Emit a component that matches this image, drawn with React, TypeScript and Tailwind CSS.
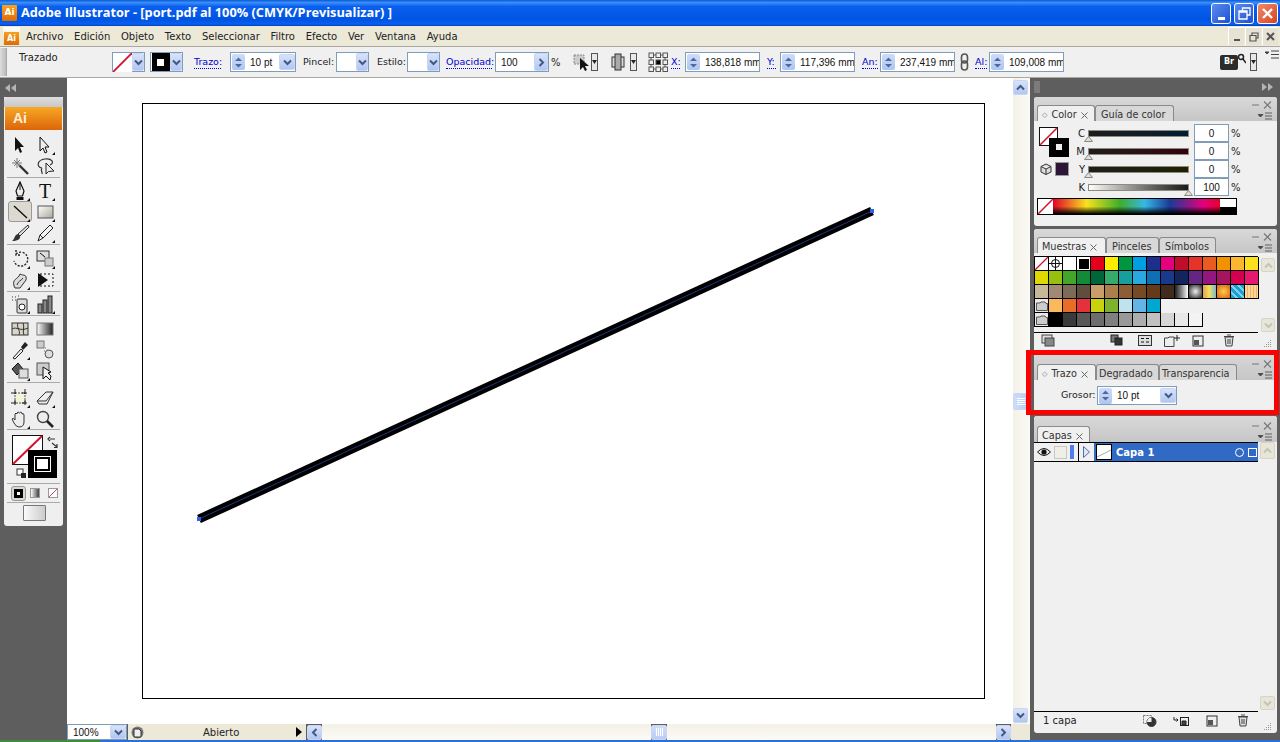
import type { ReactNode } from "react";

const ui = "font-['DejaVu_Sans',sans-serif]";
const num = "font-['Liberation_Sans',sans-serif] text-[10px] text-[#111] whitespace-nowrap";

function Chevron({ dir = "down" }: { dir?: "down" | "up" | "left" | "right" }) {
  const rot = { down: 0, up: 180, left: 90, right: -90 }[dir];
  return (
    <svg width="9" height="7" viewBox="0 0 9 7" style={{ transform: `rotate(${rot}deg)` }}>
      <path d="M1 1.5 L4.5 5 L8 1.5" fill="none" stroke="#44597f" strokeWidth="2" />
    </svg>
  );
}

function XpButton({ dir, className }: { dir: "down" | "up" | "left" | "right"; className: string }) {
  return (
    <div className={`flex items-center justify-center rounded-[2px] border border-[#c9d6f2] bg-gradient-to-b from-[#d8e3fb] to-[#b1c6f3] ${className}`}>
      <Chevron dir={dir} />
    </div>
  );
}

function Spin() {
  return (
    <div className="flex h-[16px] w-[13px] shrink-0 items-center justify-center rounded-[2px] bg-gradient-to-b from-[#cfdcf8] to-[#aec4f1]">
      <svg width="9" height="13" viewBox="0 0 9 13">
        <path d="M1 5 L4.5 1.5 L8 5 Z M1 8 L4.5 11.5 L8 8 Z" fill="#4c6a9c" />
      </svg>
    </div>
  );
}

function Measure({ value, className = "" }: { value: string; className?: string }) {
  return (
    <div className={`flex h-[20px] w-[75px] items-center overflow-hidden border border-[#7f9db9] bg-white pl-[1px] ${className}`}>
      <Spin />
      <span className={`ml-[5px] ${num}`}>{value}</span>
    </div>
  );
}

function BlueLabel({ children, className = "" }: { children: ReactNode; className?: string }) {
  return <span className={`whitespace-nowrap border-b border-dotted border-[#0000cc] text-[9.5px] leading-[12px] text-[#0000d0] ${className}`}>{children}</span>;
}

function Swatch({ children, className = "" }: { children?: ReactNode; className?: string }) {
  return (
    <div className={`flex h-[20px] w-[33px] items-stretch border border-[#7f9db9] bg-white ${className}`}>
      <div className="flex w-[20px] items-center justify-center">{children}</div>
      <XpButton dir="down" className="w-[12px]" />
    </div>
  );
}

function MiniDrop({ className = "" }: { className?: string }) {
  return (
    <div className={`flex h-[18px] w-[7px] items-center justify-center border border-[#555] bg-[#e8e8e8] ${className}`}>
      <svg width="5" height="4" viewBox="0 0 5 4"><path d="M0 0 H5 L2.5 4 Z" fill="#222" /></svg>
    </div>
  );
}

function NoneSlash({ size = 20 }: { size?: number }) {
  return (
    <svg width={size} height={size} viewBox="0 0 20 20">
      <rect width="20" height="20" fill="#fff" />
      <path d="M0 20 L20 0" stroke="#d4122d" strokeWidth="2" />
    </svg>
  );
}

function TitleBar() {
  return (
    <div className="flex h-[26px] items-center bg-[linear-gradient(180deg,#0a5bd8_0%,#3b8ffb_10%,#0a5fee_25%,#0054e3_75%,#0a60ee_92%,#0040c0_100%)] pl-[2px] pr-[2px]">
      <div className="flex h-[16px] w-[15px] items-center justify-center rounded-[1px] bg-gradient-to-b from-[#f9a61c] to-[#dd6a06] text-[9px] font-bold text-white">Ai</div>
      <span className="ml-[4px] whitespace-nowrap font-['Open_Sans',sans-serif] text-[12.75px] font-bold text-white">Adobe Illustrator - [port.pdf al 100% (CMYK/Previsualizar) ]</span>
      <div className="ml-auto flex gap-[3px]">
        <div className="flex h-[21px] w-[20px] items-end justify-center rounded-[3px] border border-white bg-gradient-to-br from-[#5b8cf0] to-[#1f4fd0] pb-[3px]">
          <div className="h-[3px] w-[7px] bg-white" />
        </div>
        <div className="flex h-[21px] w-[20px] items-center justify-center rounded-[3px] border border-white bg-gradient-to-br from-[#5b8cf0] to-[#1f4fd0]">
          <svg width="13" height="13" viewBox="0 0 13 13" fill="none" stroke="#fff" strokeWidth="1.3"><path d="M4.5 3.5 V1 H12 V8 H9.5 M1 4 H9 V12 H1 Z M1 5 H9" /></svg>
        </div>
        <div className="flex h-[21px] w-[21px] items-center justify-center rounded-[3px] border border-white bg-gradient-to-br from-[#ee8a68] to-[#d8401c]">
          <svg width="13" height="13" viewBox="0 0 13 13"><path d="M2 2 L11 11 M11 2 L2 11" stroke="#fff" strokeWidth="2.4" /></svg>
        </div>
      </div>
    </div>
  );
}

function MenuBar() {
  const items = ["Archivo", "Edición", "Objeto", "Texto", "Seleccionar", "Filtro", "Efecto", "Ver", "Ventana", "Ayuda"];
  return (
    <div className="flex h-[20px] items-center bg-[#ece9d8] pl-[3px] pr-[2px]">
      <div className="flex h-[18px] w-[17px] items-end justify-center rounded-[1px] bg-gradient-to-b from-white to-[#f3d8a8]">
        <div className="flex h-[13px] w-[15px] items-center justify-center bg-gradient-to-b from-[#f3a020] to-[#dc6a08] text-[8px] font-bold text-white">Ai</div>
      </div>
      <div className="ml-[6px] flex gap-[10.7px] text-[10px] text-[#222]">
        {items.map((m) => <span key={m}>{m}</span>)}
      </div>
      <div className="ml-auto flex gap-[1px]">
        {["min", "res", "x"].map((k) => (
          <div key={k} className="flex h-[18px] w-[16px] items-center justify-center border-l border-t border-white bg-[#e6e3d4]">
            {k === "min" && <div className="mt-[6px] h-[2px] w-[6px] bg-[#555]" />}
            {k === "res" && <svg width="10" height="10" viewBox="0 0 10 10" fill="none" stroke="#555" strokeWidth="1.2"><path d="M3 3 V1 H9 V6 H7 M1 3.5 H7 V9 H1 Z" /></svg>}
            {k === "x" && <svg width="9" height="9" viewBox="0 0 9 9"><path d="M1 1 L8 8 M8 1 L1 8" stroke="#555" strokeWidth="2" /></svg>}
          </div>
        ))}
      </div>
    </div>
  );
}

function ControlBar() {
  return (
    <div className="flex h-[32px] items-center overflow-hidden border-y border-[#a8a8a0] bg-[#f0f0f0] [&>*]:shrink-0">
      <div className="h-[28px] w-[7px] border-r border-[#aaa] bg-gradient-to-r from-[#ddd] to-[#bbb]" />
      <span className="ml-[12px] mb-[9px] w-[93px] text-[10px] text-[#222]">Trazado</span>
      <Swatch><NoneSlash size={19} /></Swatch>
      <Swatch className="ml-[5px]">
        <div className="flex h-[18px] w-[18px] items-center justify-center bg-black"><div className="h-[7px] w-[7px] bg-white" /></div>
      </Swatch>
      <BlueLabel className="ml-[11px] w-[27px]">Trazo:</BlueLabel>
      <div className="ml-[9px] flex h-[20px] w-[66px] items-center border border-[#7f9db9] bg-white pl-[1px]">
        <Spin />
        <span className={`ml-[5px] ${num}`}>10 pt</span>
        <XpButton dir="down" className="ml-auto h-[16px] w-[16px]" />
      </div>
      <span className="ml-[7px] w-[33px] whitespace-nowrap text-[9.5px] text-[#222]">Pincel:</span>
      <Swatch />
      <span className="ml-[8px] w-[30px] whitespace-nowrap text-[9.5px] text-[#222]">Estilo:</span>
      <Swatch />
      <BlueLabel className="ml-[6px] w-[46px]">Opacidad:</BlueLabel>
      <div className="ml-[3px] flex h-[20px] w-[54px] items-center border border-[#7f9db9] bg-white pl-[5px]">
        <span className={num}>100</span>
        <XpButton dir="right" className="ml-auto h-[18px] w-[14px]" />
      </div>
      <span className="ml-[2px] w-[21px] text-[10px] text-[#222]">%</span>
      <svg width="18" height="20" viewBox="0 0 18 20">
        <rect x="2" y="3" width="10" height="9" fill="#ccc" stroke="#888" strokeDasharray="2 1" />
        <path d="M8 6 L8 18 L11 15 L13 19 L15 18 L13 14 L17 14 Z" fill="#111" />
      </svg>
      <MiniDrop className="ml-[1px]" />
      <svg className="ml-[13px]" width="14" height="18" viewBox="0 0 14 18">
        <rect x="1" y="4" width="12" height="10" fill="#ddd" stroke="#333" />
        <rect x="4" y="1" width="6" height="16" fill="#aaa" stroke="#333" />
      </svg>
      <MiniDrop className="ml-[5px]" />
      <svg className="ml-[11px]" width="20" height="20" viewBox="0 0 20 20">
        {[1, 8, 15].flatMap((x) => [1, 8, 15].map((y) => (
          <rect key={`${x}-${y}`} x={x} y={y} width="4.5" height="4.5" fill={x === 8 && y === 8 ? "#000" : "#eee"} stroke="#555" />
        )))}
        <path d="M5.5 3 H8 M12.5 3 H15 M5.5 17 H8 M12.5 17 H15 M3 5.5 V8 M3 12.5 V15 M17 5.5 V8 M17 12.5 V15" stroke="#555" />
      </svg>
      <BlueLabel className="ml-[3px] w-[9px]">X:</BlueLabel>
      <Measure value="138,818 mm" className="ml-[5px]" />
      <BlueLabel className="ml-[7px] w-[9px]">Y:</BlueLabel>
      <Measure value="117,396 mm" className="ml-[4px]" />
      <BlueLabel className="ml-[7px] w-[16px]">An:</BlueLabel>
      <Measure value="237,419 mm" className="ml-[2px]" />
      <svg className="ml-[5px]" width="9" height="18" viewBox="0 0 9 18" fill="none" stroke="#555" strokeWidth="1.6">
        <rect x="1.5" y="1" width="6" height="9" rx="3" />
        <rect x="1.5" y="8" width="6" height="9" rx="3" />
      </svg>
      <BlueLabel className="ml-[6px] w-[12px]">Al:</BlueLabel>
      <Measure value="109,008 mm" className="ml-[2px]" />
      <div className="ml-[156px] flex h-[15px] w-[18px] items-center justify-center rounded-[2px] bg-[#2c2c2c] text-[8px] font-bold text-white">Br</div>
      <svg className="mb-[6px]" width="8" height="14" viewBox="0 0 8 14" fill="none" stroke="#222" strokeWidth="1.5"><circle cx="3" cy="5" r="2.5" /><path d="M5 7 L8 11" /></svg>
      <MiniDrop className="ml-[4px]" />
      <svg className="ml-[8px] mb-[14px]" width="14" height="10" viewBox="0 0 14 10"><path d="M0 2 H4 L2 4 Z M6 1 H14 M6 4.5 H14 M6 8 H14" stroke="#444" fill="#444" /></svg>
    </div>
  );
}

const toolIcons: Record<string, ReactNode> = {
  select: <path d="M5 2 L5 16 L8 13 L10 18 L12 17 L10 12 L14 12 Z" fill="#111" />,
  direct: <path d="M5 2 L5 16 L8 13 L10 18 L12 17 L10 12 L14 12 Z" fill="#eee" stroke="#111" />,
  wand: <><path d="M9 9 L18 18" stroke="#333" strokeWidth="2.4" /><path d="M7 2 V12 M2 7 H12 M4 4 L10 10 M10 4 L4 10" stroke="#777" /></>,
  lasso: <><path d="M7 12 C1 11 2 4 10 3 C17 2 20 7 15 9 M7 12 C5 15 8 16 7 18" fill="none" stroke="#333" strokeWidth="1.2" /><path d="M11 7 L11 18 L13.5 15.5 L19 15 Z" fill="#eee" stroke="#222" /></>,
  pen: <><path d="M10 1 L14 10 L12.5 15 H7.5 L6 10 Z" fill="#eee" stroke="#111" strokeWidth="1.2" /><path d="M10 1 V9" stroke="#111" /><rect x="6.5" y="16" width="7" height="3" fill="#111" /></>,
  type: <text x="10" y="17" textAnchor="middle" fontSize="20" fontFamily="Liberation Serif" fill="#111">T</text>,
  line: <path d="M4 4 L17 16" stroke="#111" strokeWidth="1.4" />,
  rect: <><defs><linearGradient id="tool-rect" x1="0" y1="0" x2="1" y2="1"><stop offset="0" stopColor="#fff" /><stop offset="1" stopColor="#aaa79a" /></linearGradient></defs><rect x="3" y="4" width="15" height="12" fill="url(#tool-rect)" stroke="#555" /></>,
  brush: <><path d="M18 2 L8 11 L10 13 L19 4 Z" fill="#ddd" stroke="#333" /><path d="M8 11 C4 12 5 16 2 18 C7 18 11 16 10 13 Z" fill="#333" /></>,
  pencil: <><path d="M15 2 L18 5 L8 15 L3 18 L5 12 Z" fill="#f3f3f3" stroke="#222" /><path d="M5 12 L8 15" stroke="#222" /></>,
  rotate: <path d="M6 5 A7 7 0 1 1 4 12 M6 1 V6 H11" fill="none" stroke="#222" strokeWidth="1.4" strokeDasharray="2 1.5" />,
  scale: <><rect x="2" y="2" width="12" height="10" fill="#ddd" stroke="#333" /><rect x="10" y="9" width="8" height="8" fill="#ccc" stroke="#777" /><path d="M5 4 L10 8" stroke="#111" /></>,
  warp: <><path d="M4 16 C2 8 8 10 10 4 C14 6 17 4 16 10 L10 18 H5 Z" fill="#ddd" stroke="#333" /><path d="M7 15 C8 11 11 11 13 8" fill="none" stroke="#333" /></>,
  free: <><rect x="5" y="4" width="13" height="12" fill="none" stroke="#111" strokeDasharray="2 2" /><path d="M3 3 L3 17 L13 10 Z" fill="#111" /></>,
  spray: <><path d="M2 3 h1 M5 3 h1 M2 6 h1 M5 6 h1 M8 2 h1" stroke="#333" /><rect x="7" y="5" width="10" height="14" rx="1" fill="#ddd" stroke="#333" /><circle cx="12" cy="13" r="3" fill="#fff" stroke="#222" /></>,
  graph: <><rect x="3" y="10" width="4" height="9" fill="#888" stroke="#222" /><rect x="8" y="6" width="4" height="13" fill="#888" stroke="#222" /><rect x="13" y="2" width="4" height="17" fill="#888" stroke="#222" /></>,
  mesh: <><rect x="2" y="4" width="16" height="12" fill="#d8d4c8" stroke="#333" /><path d="M2 10 C7 7 10 13 18 9 M8 4 C6 9 11 11 9 16 M13 4 C15 8 12 12 14 16" fill="none" stroke="#333" /></>,
  gradient: <><defs><linearGradient id="tool-grad"><stop offset="0" stopColor="#fff" /><stop offset="1" stopColor="#222" /></linearGradient></defs><rect x="2" y="4" width="16" height="12" fill="url(#tool-grad)" stroke="#777" /></>,
  dropper: <><path d="M3 18 L11 9 L13 11 L5 19 Z" fill="#eee" stroke="#222" /><path d="M11 7 L15 2 L18 5 L13 10 Z" fill="#222" /></>,
  blend: <><rect x="2" y="1" width="7" height="7" fill="#ccc" stroke="#777" /><circle cx="14" cy="14" r="4" fill="#ddd" stroke="#555" /><path d="M10 8 h1 M12 10 h1 M9 11 h1" stroke="#777" /></>,
  bucket: <><path d="M2 8 L8 2 L13 8 L7 14 Z" fill="#555" stroke="#111" /><rect x="9" y="8" width="9" height="9" fill="#ddd" stroke="#555" /></>,
  paintsel: <><rect x="2" y="2" width="12" height="12" fill="#ccc" stroke="#555" /><path d="M8 6 L8 18 L11 15 L15 19 L16 15 L13 12 L16 11 Z" fill="#eee" stroke="#111" /></>,
  slice: <><rect x="5" y="5" width="10" height="10" fill="#f4f4d8" stroke="#555" strokeDasharray="2 1" /><path d="M1 5 H19 M1 15 H19 M5 1 V19 M15 1 V19" stroke="#222" strokeDasharray="5 6" /></>,
  eraser: <><path d="M2 13 L11 4 H18 L12 16 H4 Z" fill="#eee" stroke="#333" /><path d="M2 13 H11 L18 4" fill="none" stroke="#333" /></>,
  hand: <path d="M5 11 V5 Q6 3 7 5 V4 Q8 2 9.5 4 Q11 2 12 4 V5 Q14 4 14 6 V13 Q14 18 9 18 Q6 18 4 14 L2 10 Q3 8 5 11 Z" fill="#eee" stroke="#333" />,
  zoom: <><circle cx="8" cy="8" r="5.5" fill="#eee" stroke="#444" strokeWidth="1.4" /><path d="M12 12 L18 18" stroke="#222" strokeWidth="2.6" /></>,
};

function Tool({ name, active, flag = true }: { name: string; active?: boolean; flag?: boolean }) {
  return (
    <div className={`flex h-[21px] w-[24px] items-center justify-center ${active ? "rounded-[3px] border border-[#999] bg-[#dcdad0]" : ""}`}>
      <svg width="20" height="20" viewBox="0 0 20 20">
        {toolIcons[name]}
        {flag && <path d="M20 17 V20 H17 Z" fill="#111" />}
      </svg>
    </div>
  );
}

function ToolRow({ a, b, active, flagA = true, flagB = true }: { a: string; b: string; active?: boolean; flagA?: boolean; flagB?: boolean }) {
  return (
    <div className="flex gap-[1px] pl-[4px]">
      <Tool name={a} active={active} flag={flagA} />
      <Tool name={b} flag={flagB} />
    </div>
  );
}

function Sep() {
  return <div className="mx-[3px] h-px bg-[#a9a9a9]" />;
}

function Toolbox() {
  return (
    <div className="flex w-[67px] shrink-0 flex-col bg-[#5e5e5e] pl-[4px] pr-[4px]">
      <div className="flex h-[19px] items-center pl-[1px]">
        <svg width="11" height="8" viewBox="0 0 11 8"><path d="M5 0 V8 L0 4 Z M11 0 V8 L6 4 Z" fill="#b5b5b5" /></svg>
      </div>
      <div className="flex h-[429px] flex-col rounded-b-[3px] bg-[#efefef]">
        <div className="h-[10px] rounded-t-[3px] bg-gradient-to-b from-[#dedede] to-[#c8c8c8]" />
        <div className="mx-[1px] flex h-[23px] items-center bg-gradient-to-b from-[#f6a723] to-[#dd6509] pl-[8px] font-['Liberation_Sans',sans-serif] text-[14px] font-bold text-[#fdeed8]">Ai</div>
        <div className="flex flex-col pt-[4px]">
          <ToolRow a="select" b="direct" flagA={false} />
          <ToolRow a="wand" b="lasso" flagA={false} flagB={false} />
        </div>
        <div className="pt-[1px]"><Sep /></div>
        <div className="flex flex-col pt-[2px]">
          <ToolRow a="pen" b="type" />
          <ToolRow a="line" b="rect" active />
          <ToolRow a="brush" b="pencil" flagA={false} />
        </div>
        <div className="pt-[1px]"><Sep /></div>
        <div className="flex flex-col pt-[3px]">
          <ToolRow a="rotate" b="scale" />
          <ToolRow a="warp" b="free" flagB={false} />
        </div>
        <div className="pt-[1px]"><Sep /></div>
        <div className="pt-[1px]"><ToolRow a="spray" b="graph" /></div>
        <div className="pt-[1px]"><Sep /></div>
        <div className="flex flex-col pt-[2px]">
          <ToolRow a="mesh" b="gradient" flagA={false} flagB={false} />
          <ToolRow a="dropper" b="blend" flagB={false} />
          <ToolRow a="bucket" b="paintsel" flagB={false} />
        </div>
        <div className="pt-[1px]"><Sep /></div>
        <div className="flex flex-col pt-[4px]">
          <ToolRow a="slice" b="eraser" />
          <ToolRow a="hand" b="zoom" flagB={false} />
        </div>
        <Sep />
        <svg className="ml-[7px] mt-[5px]" width="50" height="44" viewBox="0 0 50 44">
          <rect x="1.5" y="0.5" width="30" height="29" fill="#fff" stroke="#111" />
          <path d="M2 29 L31 1" stroke="#d4122d" strokeWidth="2" />
          <path d="M39 4 L44 4 M46 12 L41 8 M39 2 L37 4 L39 6 M46 9 V12.5 H43" fill="none" stroke="#333" strokeWidth="1.2" />
          <rect x="6" y="34" width="6" height="6" fill="#fff" stroke="#333" />
          <rect x="10" y="38" width="5" height="5" fill="#222" />
          <rect x="17" y="15" width="29" height="28" fill="#000" />
          <rect x="23.5" y="21.5" width="16" height="15" fill="none" stroke="#fff" />
          <rect x="26" y="24" width="11" height="10" fill="#fff" />
        </svg>
        <div className="mt-[4px]"><Sep /></div>
        <div className="flex h-[18px] items-center pl-[7px]">
          <div className="flex h-[15px] w-[15px] items-center justify-center rounded-[3px] border border-[#999] bg-[#dcdad0]">
            <div className="flex h-[9px] w-[9px] items-center justify-center bg-black"><div className="h-[3px] w-[3px] bg-white" /></div>
          </div>
          <div className="ml-[4px] h-[10px] w-[10px] border border-[#999] bg-gradient-to-r from-white to-[#444]" />
          <div className="ml-[8px] h-[10px] w-[10px] border border-[#999]"><NoneSlash size={8} /></div>
        </div>
        <Sep />
        <div className="ml-[19px] mt-[2px] h-[16px] w-[23px] rounded-[1px] border border-[#777] bg-gradient-to-r from-[#fafafa] to-[#ccc]" />
      </div>
    </div>
  );
}

function Canvas() {
  return (
    <div className="min-w-0 flex-1 bg-white pl-[75px] pt-[25px]">
      <div className="relative h-[596px] w-[843px] border border-black">
        <svg className="absolute left-[-1px] top-[-1px]" width="843" height="596" viewBox="0 0 843 596">
          <path d="M57 416 L730 108" stroke="#000" strokeWidth="9" />
          <path d="M57 416 L730 108" stroke="#3f6ff0" strokeWidth="0.5" />
          <rect x="55" y="414" width="4" height="4" fill="#2a62f0" />
          <rect x="728" y="106" width="4" height="4" fill="#2a62f0" />
        </svg>
      </div>
    </div>
  );
}

function VScroll() {
  return (
    <div className="flex w-[17px] shrink-0 flex-col bg-gradient-to-r from-[#f3f1e6] to-[#fbfaf5] pt-[2px]">
      <XpButton dir="up" className="h-[15px] w-[15px]" />
      <div className="mt-[298px] flex h-[17px] w-[15px] flex-col items-center justify-center gap-[1px] rounded-[2px] border border-[#c9d6f2] bg-gradient-to-r from-[#cfdcfa] to-[#b9ccf5]">
        {[0, 1, 2, 3].map((i) => <div key={i} className="h-px w-[8px] bg-white" />)}
      </div>
      <XpButton dir="down" className="mt-[298px] h-[15px] w-[15px]" />
    </div>
  );
}

function StatusBar() {
  return (
    <div className="flex h-[16px] shrink-0 items-center">
      <div className="flex h-[16px] w-[60px] items-center border border-[#7f9db9] bg-white pl-[5px]">
        <span className={num}>100%</span>
        <XpButton dir="down" className="ml-auto h-[14px] w-[16px]" />
      </div>
      <div className="ml-[1px] flex h-[16px] w-[178px] items-center bg-[#ece9d8] pl-[3px]">
        <svg width="13" height="13" viewBox="0 0 13 13"><circle cx="6.5" cy="6.5" r="6" fill="#777" /><path d="M3 11 V3 H8 L10 5 V11 Z" fill="#eee" stroke="#333" /></svg>
        <span className="ml-[59px] w-[93px] text-[10px] text-[#222]">Abierto</span>
        <svg width="6" height="10" viewBox="0 0 6 10"><path d="M0 0 L6 5 L0 10 Z" fill="#000" /></svg>
      </div>
      <XpButton dir="left" className="ml-[1px] h-[15px] w-[15px]" />
      <div className="h-[16px] w-[329px] bg-gradient-to-b from-[#f3f1e6] to-[#fbfaf5]" />
      <div className="flex h-[15px] w-[16px] items-center justify-center gap-[1px] rounded-[2px] border border-[#c9d6f2] bg-gradient-to-b from-[#cfdcfa] to-[#b9ccf5]">
        {[0, 1, 2, 3].map((i) => <div key={i} className="h-[8px] w-px bg-white" />)}
      </div>
      <div className="h-[16px] w-[329px] bg-gradient-to-b from-[#f3f1e6] to-[#fbfaf5]" />
      <XpButton dir="right" className="h-[15px] w-[15px]" />
      <div className="h-[16px] flex-1 bg-[#ece9d8]" />
    </div>
  );
}

function Tab({ label, active, updown, width, pad = "pl-[4px]" }: { label: string; active?: boolean; updown?: boolean; width: string; pad?: string }) {
  return (
    <div className={`flex h-[16px] items-center whitespace-nowrap rounded-t-[3px] border border-b-0 border-[#8a8a8a] pt-[3px] text-[9.7px] text-[#333] ${pad} ${width} ${active ? "bg-[#f0f0f0]" : "bg-[#d8d8d8]"}`}>
      {updown && <span className="mr-[4px] text-[7px] leading-none text-[#777]">◇</span>}
      <span>{label}</span>
      {active && (
        <svg className="ml-[4px]" width="7" height="7" viewBox="0 0 7 7"><path d="M0.5 0.5 L6.5 6.5 M6.5 0.5 L0.5 6.5" stroke="#666" /></svg>
      )}
    </div>
  );
}

function PanelHead({ tabs, pad }: { tabs: ReactNode; pad: string }) {
  return (
    <div className={`flex items-end rounded-t-[3px] bg-gradient-to-b from-[#d9d9d9] to-[#c6c6c6] pl-[3px] ${pad}`}>
      <div className="flex">{tabs}</div>
      <div className="-mt-[4px] ml-auto flex h-[20px] flex-col items-end justify-between pr-[5px]">
        <svg width="26" height="8" viewBox="0 0 26 8"><path d="M6 4 H13 M18 0.5 L25 7.5 M25 0.5 L18 7.5" stroke="#777" strokeWidth="1.1" /></svg>
        <svg width="14" height="9" viewBox="0 0 14 9"><path d="M0 2.5 H5 L2.5 5 Z M7 1 H14 M7 4 H14 M7 7 H14" stroke="#444" fill="#444" strokeWidth="0.8" /></svg>
      </div>
    </div>
  );
}

function ColorRow({ label, value, track, thumb }: { label: string; value: string; track: string; thumb: "left" | "right" }) {
  return (
    <div className="flex h-[18px] items-center">
      <span className="w-[15px] text-right text-[10px] text-[#222]">{label}</span>
      <div className="relative ml-[3px] h-[7px] w-[101px]">
        <div className={`h-[7px] w-[101px] border border-[#8f8a7a] ${track}`} />
        <svg className={`absolute top-[6px] ${thumb === "left" ? "left-[-4px]" : "right-[-4px]"}`} width="9" height="6" viewBox="0 0 9 6"><path d="M0.5 5.5 L4.5 0.5 L8.5 5.5 Z" fill="#e4e0d0" stroke="#888" /></svg>
      </div>
      <div className={`ml-[5px] flex h-[18px] w-[35px] items-center justify-center border border-[#7f9db9] bg-white ${num}`}>{value}</div>
      <span className="ml-[2px] text-[10px] text-[#222]">%</span>
    </div>
  );
}

function ColorPanel() {
  return (
    <div className="mt-[1px] h-[129px] rounded-[3px] bg-[#f0f0f0]">
      <PanelHead pad="pt-[8px]" tabs={<><Tab label="Color" active updown width="w-[58px]" /><Tab label="Guía de color" width="w-[79px]" pad="pl-[5px]" /></>} />
      <div className="flex pl-[3px] pt-[3px]">
        <div className="flex w-[33px] flex-col pt-[3px]">
          <svg width="32" height="32" viewBox="0 0 32 32">
            <rect x="2.5" y="0.5" width="18" height="18" fill="#fff" stroke="#111" />
            <path d="M3 18 L20 1" stroke="#d4122d" strokeWidth="1.6" />
            <rect x="12" y="11" width="20" height="19" fill="#000" />
            <rect x="19" y="17" width="6" height="6" fill="#eee" />
          </svg>
          <div className="mt-[3px] flex items-center gap-[3px] pl-[3px]">
            <svg width="12" height="12" viewBox="0 0 12 12" fill="#ddd" stroke="#333"><path d="M6 1 L11 3.5 V9 L6 11.5 L1 9 V3.5 Z M6 6 V11.5 M1 3.5 L6 6 L11 3.5" /></svg>
            <div className="h-[14px] w-[14px] border border-[#999] bg-[#2e1538]" />
          </div>
        </div>
        <div className="flex flex-col">
          <ColorRow label="C" value="0" track="bg-gradient-to-r from-[#1d1d1d] to-[#001d33]" thumb="left" />
          <ColorRow label="M" value="0" track="bg-gradient-to-r from-[#1d1d1d] to-[#33000f]" thumb="left" />
          <ColorRow label="Y" value="0" track="bg-gradient-to-r from-[#1d1d1d] to-[#1f2000]" thumb="left" />
          <ColorRow label="K" value="100" track="bg-gradient-to-r from-white to-[#1a1a1a]" thumb="right" />
        </div>
      </div>
      <div className="ml-[3px] mt-[2px] flex h-[17px] w-[200px] items-stretch border border-black">
        <NoneSlash size={15} />
        <div className="flex-1 bg-[linear-gradient(90deg,#e4002b,#f7e21c_20%,#3fae2a_40%,#35b7e5_55%,#1b3a96_70%,#e4007c_90%,#e4002b)]">
          <div className="h-full w-full bg-gradient-to-b from-white/0 via-white/0 to-black" />
        </div>
        <div className="flex w-[16px] flex-col"><div className="h-1/2 bg-white" /><div className="h-1/2 bg-black" /></div>
      </div>
    </div>
  );
}

const rowA = ["#e2001a", "#ffed00", "#009640", "#009fe3", "#1d2f8a", "#e5007d", "#c00d2c", "#e63329", "#ea5b1f", "#f39200", "#fbb731", "#f9e21c"];
const rowB = ["#dfd900", "#97bf0d", "#41a62a", "#138a36", "#00663a", "#36a96b", "#169f9c", "#29a9e0", "#0f6fb5", "#173a8a", "#14245f", "#652583", "#941680", "#a4145f", "#d4004f", "#e6186f"];
const rowC = ["#c8b89a", "#a08a76", "#7c6b58", "#5f4d3d", "#c89f6a", "#ad7d4c", "#8e5d36", "#764a25", "#653a18", "#422a1d"];
const rowD = ["#fbb95f", "#e96d26", "#e4313c", "#c8d30e", "#7db22c", "#bfe3ec", "#62b5e5", "#00a7d3"];
const rowE = ["#000000", "#3a3a3a", "#585858", "#6d6d6d", "#808080", "#999999", "#adadad", "#c0c0c0", "#d6d6d6", "#e8e8e8", "#f3f3f3"];

function Cell({ color, className = "", children }: { color?: string; className?: string; children?: ReactNode }) {
  return (
    <div className={`flex h-[14px] w-[14px] shrink-0 items-center justify-center overflow-hidden border-b border-r border-black ${className}`} style={color ? { backgroundColor: color } : undefined}>
      {children}
    </div>
  );
}

function FolderCell() {
  return (
    <Cell className="bg-[#e8e8e8]">
      <svg width="12" height="10" viewBox="0 0 12 10"><path d="M0.5 9.5 V2 H4 L5 1 H9 L10 2.5 H11.5 V9.5 Z" fill="#ccc" stroke="#555" /></svg>
    </Cell>
  );
}

function ScrollMuted({ dir, className = "" }: { dir: "up" | "down"; className?: string }) {
  return (
    <div className={`flex h-[14px] w-[14px] items-center justify-center rounded-[2px] border border-[#d6d4c4] bg-[#e8e6d8] ${className}`}>
      <svg width="9" height="7" viewBox="0 0 9 7" className={dir === "up" ? "rotate-180" : ""}>
        <path d="M1 1.5 L4.5 5 L8 1.5" fill="none" stroke="#c4c4bc" strokeWidth="2" />
      </svg>
    </div>
  );
}

function Grip() {
  return (
    <svg width="9" height="9" viewBox="0 0 9 9" fill="#999">
      <rect x="7" y="1" width="1" height="1" /><rect x="5" y="3" width="1" height="1" /><rect x="7" y="3" width="1" height="1" />
      <rect x="3" y="5" width="1" height="1" /><rect x="5" y="5" width="1" height="1" /><rect x="7" y="5" width="1" height="1" />
      <rect x="1" y="7" width="1" height="1" /><rect x="3" y="7" width="1" height="1" /><rect x="5" y="7" width="1" height="1" /><rect x="7" y="7" width="1" height="1" />
    </svg>
  );
}

function NewIcon() {
  return <svg width="12" height="12" viewBox="0 0 12 12"><rect x="1" y="1" width="10" height="10" fill="#eee" stroke="#333" /><path d="M2 5 H7 V10 H2 Z" fill="#555" /></svg>;
}

function TrashIcon() {
  return <svg width="12" height="13" viewBox="0 0 12 13" fill="#ddd" stroke="#444"><path d="M2 3 H10 L9 12 H3 Z M1 2.5 H11 M4 1 H8 M5 5 V10 M7 5 V10" /></svg>;
}

function SwatchesPanel() {
  return (
    <div className="mt-[3px] h-[123px] rounded-t-[3px] bg-[#f0f0f0]">
      <PanelHead pad="pt-[8px]" tabs={<><Tab label="Muestras" active width="w-[69px]" /><Tab label="Pinceles" width="w-[53px]" pad="pl-[5px]" /><Tab label="Símbolos" width="w-[57px]" pad="pl-[5px]" /></>} />
      <div className="flex pt-[3px]">
        <div className="w-[224px]">
          <div className="flex border-l border-t border-black">
            <Cell><NoneSlash size={13} /></Cell>
            <Cell className="bg-white">
              <svg width="13" height="13" viewBox="0 0 13 13" fill="none" stroke="#111"><circle cx="6.5" cy="6.5" r="4" /><path d="M6.5 0 V13 M0 6.5 H13" /></svg>
            </Cell>
            <Cell color="#ffffff" />
            <Cell color="#ffffff"><div className="h-[10px] w-[10px] bg-black" /></Cell>
            {rowA.map((c) => <Cell key={c} color={c} />)}
          </div>
          <div className="flex border-l border-black">{rowB.map((c) => <Cell key={c} color={c} />)}</div>
          <div className="flex border-l border-black">
            {rowC.map((c) => <Cell key={c} color={c} />)}
            <Cell className="bg-gradient-to-r from-[#222] to-white" />
            <Cell className="bg-[radial-gradient(circle,#eee,#222)]" />
            <Cell className="bg-[linear-gradient(90deg,#e9a04f,#f0e060,#7bb8d0)]" />
            <Cell className="bg-[radial-gradient(circle,#f9d040,#e05a20)]" />
            <Cell className="bg-[repeating-linear-gradient(45deg,#18a0d0_0,#18a0d0_3px,#7fd0ea_3px,#7fd0ea_5px)]" />
            <Cell className="bg-[repeating-linear-gradient(90deg,#fbd89a_0,#fbd89a_2px,#f8b060_2px,#f8b060_3px)]" />
          </div>
          <div className="flex w-fit border-l border-black">
            <FolderCell />
            {rowD.map((c) => <Cell key={c} color={c} />)}
          </div>
          <div className="flex w-fit border-l border-black">
            <FolderCell />
            {rowE.map((c) => <Cell key={c} color={c} />)}
          </div>
        </div>
        <div className="ml-[3px] mt-[2px] flex h-[74px] flex-col justify-between">
          <ScrollMuted dir="up" />
          <ScrollMuted dir="down" />
        </div>
      </div>
      <div className="flex">
        <div className="flex h-[16px] w-[224px] items-center border-t border-black">
          <svg className="ml-[7px]" width="16" height="13" viewBox="0 0 16 13" fill="#ddd" stroke="#444"><rect x="1" y="1" width="10" height="8" /><rect x="4" y="4" width="9" height="8" fill="#888" /></svg>
          <svg className="ml-[53px]" width="15" height="13" viewBox="0 0 15 13" stroke="#222"><rect x="1" y="1" width="7" height="7" fill="#777" /><rect x="5" y="4" width="7" height="7" fill="#333" /></svg>
          <svg className="ml-[13px]" width="14" height="11" viewBox="0 0 14 11" stroke="#333" fill="#ddd"><rect x="0.5" y="0.5" width="13" height="10" /><path d="M3 3.5 H6 M8 3.5 H11 M3 7 H6 M8 7 H11" stroke="#111" /></svg>
          <svg className="ml-[12px]" width="16" height="12" viewBox="0 0 16 12" stroke="#444" fill="#eee"><path d="M0.5 11.5 V3 H4 L5 2 H10 V11.5 Z" /><path d="M13 0 V6 M10 3 H16" stroke="#222" /></svg>
          <div className="ml-[12px]"><NewIcon /></div>
          <div className="ml-[19px]"><TrashIcon /></div>
        </div>
        <div className="ml-auto self-end pr-[5px]"><Grip /></div>
      </div>
    </div>
  );
}

function StrokePanel() {
  return (
    <div className="h-[60px] bg-[#f0f0f0]">
      <PanelHead pad="pt-[12px]" tabs={<><Tab label="Trazo" active updown width="w-[59px]" /><Tab label="Degradado" width="w-[63px]" pad="pl-[2px]" /><Tab label="Transparencia" width="w-[78px]" pad="pl-[2px]" /></>} />
      <div className="flex items-center pl-[27px] pt-[6px]">
        <span className="w-[36px] text-[9.5px] text-[#222]">Grosor:</span>
        <div className="flex h-[19px] w-[80px] items-center border border-[#7f9db9] bg-white pl-[1px]">
          <Spin />
          <span className={`ml-[5px] ${num}`}>10 pt</span>
          <XpButton dir="down" className="ml-auto h-[15px] w-[16px]" />
        </div>
      </div>
    </div>
  );
}

function LayersPanel() {
  return (
    <div className="mt-[4px] flex h-[317px] flex-col rounded-[3px] bg-[#f0f0f0]">
      <PanelHead pad="pt-[10px]" tabs={<Tab label="Capas" active width="w-[53px]" />} />
      <div className="flex flex-1">
        <div className="flex w-[224px] flex-col">
          <div className="flex h-[20px] items-center border-y border-black">
            <div className="flex w-[17px] items-center justify-center pl-[2px]">
              <svg width="14" height="10" viewBox="0 0 14 10"><path d="M0.5 5 Q7 -2 13.5 5 Q7 12 0.5 5 Z" fill="#eee" stroke="#111" /><circle cx="7" cy="5" r="2.6" fill="#111" /></svg>
            </div>
            <div className="ml-[3px] h-[13px] w-[13px] border border-[#c8c8c0] bg-[#efefe8]" />
            <div className="ml-[3px] h-[14px] w-[4px] bg-[#4f7df0]" />
            <div className="ml-[4px] h-full w-px bg-black" />
            <svg className="ml-[4px]" width="7" height="12" viewBox="0 0 7 12"><path d="M0.5 0.5 L6.5 6 L0.5 11.5 Z" fill="#dfe6f5" stroke="#4f6ea8" /></svg>
            <div className="ml-[4px] flex h-full flex-1 items-center bg-[#316ac5] pl-[2px]">
              <div className="flex h-[16px] w-[16px] items-center justify-center border border-black bg-white">
                <svg width="14" height="14" viewBox="0 0 14 14"><path d="M0 12 L14 5" stroke="#aaa" /></svg>
              </div>
              <span className="ml-[4px] text-[10px] font-bold text-white">Capa 1</span>
              <div className="ml-auto h-[9px] w-[9px] rounded-full border border-white" />
              <div className="ml-[4px] mr-[1px] h-[9px] w-[9px] border border-white bg-[#316ac5]" />
            </div>
          </div>
          <div className="flex-1 border-b border-black" />
          <div className="flex h-[21px] items-center pb-[4px]">
            <span className="ml-[9px] w-[36px] whitespace-nowrap text-[10px] text-[#222]">1 capa</span>
            <svg className="ml-[64px]" width="14" height="12" viewBox="0 0 14 12"><rect x="0.5" y="0.5" width="8" height="8" fill="none" stroke="#777" strokeDasharray="2 1" /><circle cx="8.5" cy="7" r="4.5" fill="#333" stroke="#333" /><path d="M8.5 7 V2.5 A4.5 4.5 0 0 0 4 7 Z" fill="#eee" /></svg>
            <svg className="ml-[16px]" width="16" height="12" viewBox="0 0 16 12" fill="none" stroke="#222"><path d="M1 2 V5 H5 M3.5 3.5 L5 5 L3.5 6.5" /><rect x="7.5" y="2.5" width="8" height="8" fill="#eee" /><path d="M9 6 H13 V10 H9 Z" fill="#444" /></svg>
            <div className="ml-[17px]"><NewIcon /></div>
            <div className="ml-[19px]"><TrashIcon /></div>
          </div>
        </div>
        <div className="ml-[2px] flex flex-1 flex-col">
          <ScrollMuted dir="up" className="h-[17px] w-[15px]" />
          <ScrollMuted dir="down" className="mt-auto h-[14px] w-[15px]" />
          <div className="flex h-[23px] items-end justify-end pb-[2px] pr-[5px]"><Grip /></div>
        </div>
      </div>
    </div>
  );
}

function Dock() {
  return (
    <div className="flex w-[250px] shrink-0 flex-col bg-[#5e5e5e] pl-[4px] pr-[3px]">
      <div className="flex h-[18px] items-center justify-between pr-[4px]">
        <svg width="8" height="14" viewBox="0 0 8 14"><path d="M1 1 V13 M3 1 V13 M5 1 V13" stroke="#999" /></svg>
        <svg width="11" height="8" viewBox="0 0 11 8"><path d="M0 0 V8 L5 4 Z M6 0 V8 L11 4 Z" fill="#b5b5b5" /></svg>
      </div>
      <ColorPanel />
      <SwatchesPanel />
      <StrokePanel />
      <LayersPanel />
    </div>
  );
}

export default function App() {
  return (
    <div className={`relative flex h-[742px] w-[1280px] flex-col overflow-hidden bg-[#5e5e5e] ${ui}`}>
      <TitleBar />
      <MenuBar />
      <ControlBar />
      <div className="flex h-[662px]">
        <Toolbox />
        <div className="flex min-w-0 flex-1 flex-col">
          <div className="flex min-h-0 flex-1">
            <Canvas />
            <VScroll />
          </div>
          <StatusBar />
        </div>
        <Dock />
      </div>
      <div className="flex h-[2px]">
        <div className="w-[100px] bg-[#3c8c3c]" />
        <div className="flex-1 bg-[#2a70d8]" />
      </div>
      <div className="absolute left-[1026px] top-[350px] h-[65px] w-[253px] border-[5px] border-[#ff0000]" />
    </div>
  );
}
